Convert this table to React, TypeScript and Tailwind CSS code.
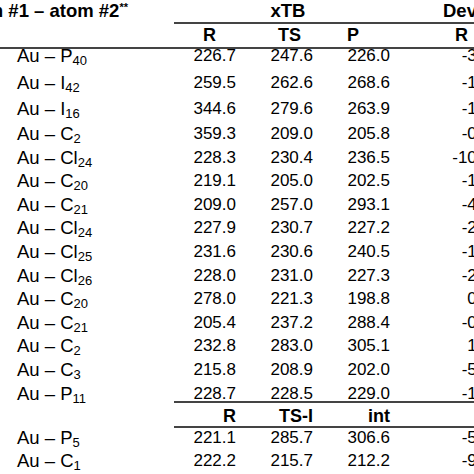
import React from 'react';

type Row = { a: string; s: string; r: string; ts: string; p: string; d: string };

const topRows: Row[] = [
  { a: 'P', s: '40', r: '226.7', ts: '247.6', p: '226.0', d: '-3.4' },
  { a: 'I', s: '42', r: '259.5', ts: '262.6', p: '268.6', d: '-1.9' },
  { a: 'I', s: '16', r: '344.6', ts: '279.6', p: '263.9', d: '-1.2' },
  { a: 'C', s: '2', r: '359.3', ts: '209.0', p: '205.8', d: '-0.7' },
  { a: 'Cl', s: '24', r: '228.3', ts: '230.4', p: '236.5', d: '-10.3' },
  { a: 'C', s: '20', r: '219.1', ts: '205.0', p: '202.5', d: '-1.8' },
  { a: 'C', s: '21', r: '209.0', ts: '257.0', p: '293.1', d: '-4.1' },
  { a: 'Cl', s: '24', r: '227.9', ts: '230.7', p: '227.2', d: '-2.6' },
  { a: 'Cl', s: '25', r: '231.6', ts: '230.6', p: '240.5', d: '-1.3' },
  { a: 'Cl', s: '26', r: '228.0', ts: '231.0', p: '227.3', d: '-2.2' },
  { a: 'C', s: '20', r: '278.0', ts: '221.3', p: '198.8', d: '0.4' },
  { a: 'C', s: '21', r: '205.4', ts: '237.2', p: '288.4', d: '-0.9' },
  { a: 'C', s: '2', r: '232.8', ts: '283.0', p: '305.1', d: '1.5' },
  { a: 'C', s: '3', r: '215.8', ts: '208.9', p: '202.0', d: '-5.2' },
  { a: 'P', s: '11', r: '228.7', ts: '228.5', p: '229.0', d: '-1.6' },
];

const bottomRows: Row[] = [
  { a: 'P', s: '5', r: '221.1', ts: '285.7', p: '306.6', d: '-5.8' },
  { a: 'C', s: '1', r: '222.2', ts: '215.7', p: '212.2', d: '-9.1' },
];

// gap above each data row (px), first rows in the scan sit a little looser
const topGaps = ['mt-[-3px]', 'mt-[7px]', 'mt-[6px]', 'mt-[5px]'];

const grid = 'grid grid-cols-[174px_77px_77px_77px_100px] h-[20px] leading-[20px]';

const DataRow: React.FC<{ row: Row; gap: string }> = ({ row, gap }) => (
  <div className={`${grid} ${gap}`}>
    <div className="pl-[17px] whitespace-nowrap text-[18.5px]">
      Au – {row.a}
      <span className="relative top-[3px] text-[13px]">{row.s}</span>
    </div>
    <div className="text-right pr-[15px]">{row.r}</div>
    <div className="text-right pr-[15px]">{row.ts}</div>
    <div className="text-right pr-[15px]">{row.p}</div>
    <div className="text-right pr-[14px]">{row.d}</div>
  </div>
);

export default function App() {
  return (
    <div className="w-[474px] h-[474px] overflow-hidden bg-white text-black text-[17px] font-['Liberation_Sans',Arial,sans-serif]">
      <div className="w-[505px]">
        {/* group header */}
        <div className="grid grid-cols-[174px_231px_100px] h-[22px] leading-[22px] font-bold text-[18.5px]">
          <div className="whitespace-nowrap ml-[-41px]">
            atom #1 – atom #2<span className="relative top-[-6px] text-[11px]">**</span>
          </div>
          <div className="text-center pr-[3px]">xTB</div>
          <div className="pl-[38px] whitespace-nowrap">Deviation</div>
        </div>
        <div className="ml-[174px] h-[2px] bg-[#444]" />
        {/* sub header */}
        <div className="grid grid-cols-[174px_77px_77px_77px_100px] h-[23px] leading-[23px] font-bold text-[18px]">
          <div />
          <div className="pl-[29px]">R</div>
          <div className="pl-[27px]">TS</div>
          <div className="pl-[19px]">P</div>
          <div className="pl-[50px]">R</div>
        </div>
        <div className="h-[2px] bg-[#444]" />

        {topRows.map((row, i) => (
          <DataRow key={i} row={row} gap={topGaps[i] ?? 'mt-[3.6px]'} />
        ))}

        <div className="ml-[174px] mt-[-3px] h-[2px] bg-[#444]" />
        <div className={`${grid} mt-[3px] font-bold text-[18px]`}>
          <div />
          <div className="text-right pr-[15px]">R</div>
          <div className="text-right pr-[15px]">TS-I</div>
          <div className="text-right pr-[15px]">int</div>
          <div />
        </div>
        <div className="ml-[174px] h-[2px] bg-[#444]" />

        <DataRow row={bottomRows[0]} gap="mt-0" />
        <DataRow row={bottomRows[1]} gap="mt-[3px]" />
      </div>
    </div>
  );
}
